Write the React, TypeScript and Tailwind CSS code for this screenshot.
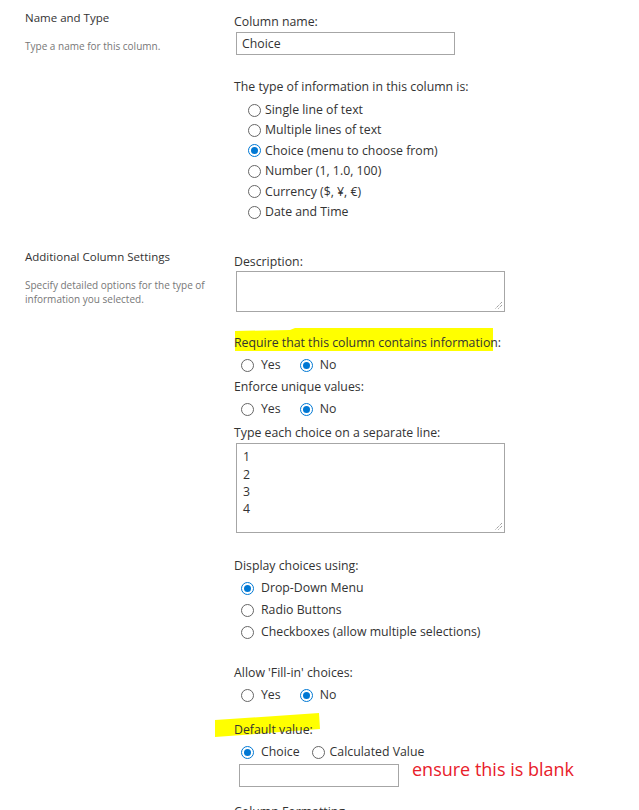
import React from "react";

const font = { fontFamily: '"Open Sans", "Noto Sans", sans-serif' };

function Radio({ checked }: { checked?: boolean }) {
    if (checked) {
        return (
            <span className="flex items-center justify-center w-[13px] h-[13px] rounded-full border border-[#0078d4] shrink-0">
                <span className="w-[7px] h-[7px] rounded-full bg-[#0078d4]" />
            </span>
        );
    }
    return <span className="w-[13px] h-[13px] rounded-full border border-[#666] shrink-0" />;
}

function Option({ label, checked, gap = "gap-[7px]" }: { label: string; checked?: boolean; gap?: string }) {
    return (
        <div className={`flex items-center ${gap}`}>
            <Radio checked={checked} />
            <span>{label}</span>
        </div>
    );
}

function YesNo() {
    return (
        <div className="flex items-center h-5 pl-[7px] mt-[2px]">
            <Option label="Yes" />
            <div className="ml-[19px]">
                <Option label="No" checked />
            </div>
        </div>
    );
}

function ResizeGrip() {
    return (
        <svg className="absolute right-[1px] bottom-[1px]" width="10" height="10" viewBox="0 0 10 10">
            <path d="M9 2 L2 9 M9 5 L5 9" stroke="#777" strokeWidth="1" strokeDasharray="1 1" />
        </svg>
    );
}

export default function App() {
    return (
        <div className="w-[639px] bg-white text-[#333] text-[12.3px]" style={font}>
            {/* Name and Type */}
            <div className="flex">
                <div className="w-[234px] pl-[25px] pt-2">
                    <p className="leading-5 text-[11.5px] text-[#333]">Name and Type</p>
                    <p className="mt-[11px] leading-[14px] text-[10px] text-[#777]">Type a name for this column.</p>
                </div>
                <div className="pt-3">
                    <p className="leading-5">Column name:</p>
                    <div className="ml-[2px] w-[219px] h-[23px] border border-[#a6a6a6] px-[5px] leading-[21px]">Choice</div>
                    <p className="leading-5 mt-[22px]">The type of information in this column is:</p>
                    <div className="pl-[14px] mt-[3px]">
                        <div className="h-[20.4px] flex items-center"><Option label="Single line of text" gap="gap-1" /></div>
                        <div className="h-[20.4px] flex items-center"><Option label="Multiple lines of text" gap="gap-1" /></div>
                        <div className="h-[20.4px] flex items-center"><Option label="Choice (menu to choose from)" checked gap="gap-1" /></div>
                        <div className="h-[20.4px] flex items-center"><Option label="Number (1, 1.0, 100)" gap="gap-1" /></div>
                        <div className="h-[20.4px] flex items-center"><Option label="Currency ($, ¥, €)" gap="gap-1" /></div>
                        <div className="h-[20.4px] flex items-center"><Option label="Date and Time" gap="gap-1" /></div>
                    </div>
                </div>
            </div>

            {/* Additional Column Settings */}
            <div className="flex mt-[25px]">
                <div className="w-[234px] pl-[25px]">
                    <p className="leading-5 text-[11.5px] text-[#333]">Additional Column Settings</p>
                    <p className="mt-[11px] leading-[14px] text-[10px] text-[#777] w-[190px]">
                        Specify detailed options for the type of information you selected.
                    </p>
                </div>
                <div className="pt-1">
                    <p className="leading-5 pt-[1px] h-5">Description:</p>
                    <div className="relative ml-[2px] w-[269px] h-[41px] border border-[#a6a6a6]">
                        <ResizeGrip />
                    </div>

                    <div className="relative mt-[21px]">
                        <svg className="absolute left-[1px] top-[-5px]" width="260" height="24" viewBox="0 0 260 24">
                            <polygon points="0,3 55,2 60,0 258,0 258,23 0,23" fill="#ffff00" />
                        </svg>
                        <p className="relative leading-5">Require that this column contains information:</p>
                    </div>
                    <YesNo />

                    <p className="leading-5 mt-[2px]">Enforce unique values:</p>
                    <YesNo />

                    <p className="leading-5 mt-[4px]">Type each choice on a separate line:</p>
                    <div className="relative ml-[2px] w-[269px] h-[90px] border border-[#a6a6a6] px-[6px] pt-[4px] leading-[17.3px]">
                        <p>1</p>
                        <p>2</p>
                        <p>3</p>
                        <p>4</p>
                        <ResizeGrip />
                    </div>

                    <p className="leading-5 mt-[23px]">Display choices using:</p>
                    <div className="pl-[7px] mt-[1px]">
                        <div className="h-[22px] flex items-center"><Option label="Drop-Down Menu" checked /></div>
                        <div className="h-[22px] flex items-center"><Option label="Radio Buttons" /></div>
                        <div className="h-[22px] flex items-center"><Option label="Checkboxes (allow multiple selections)" /></div>
                    </div>

                    <p className="leading-5 mt-[20px]">Allow 'Fill-in' choices:</p>
                    <YesNo />

                    <div className="relative mt-[15px]">
                        <svg className="absolute left-[-19px] top-[-7px]" width="110" height="26" viewBox="0 0 110 26">
                            <polygon points="0,7 104,0 105,16 0,24" fill="#ffff00" />
                        </svg>
                        <p className="relative leading-5">Default value:</p>
                    </div>
                    <div className="flex items-center h-5 pl-[7px] mt-[2px]">
                        <Option label="Choice" checked />
                        <div className="ml-3">
                            <Option label="Calculated Value" gap="gap-[5px]" />
                        </div>
                    </div>
                    <div className="flex items-start mt-[2px]">
                        <div className="ml-[5px] w-[160px] h-[23px] border border-[#a6a6a6]" />
                        <span className="ml-[13px] -mt-[7px] text-[18px] leading-6 text-[#e8202a]">ensure this is blank</span>
                    </div>

                    <p className="leading-5 mt-[15px] pb-10">Column Formatting</p>
                </div>
            </div>
        </div>
    );
}
